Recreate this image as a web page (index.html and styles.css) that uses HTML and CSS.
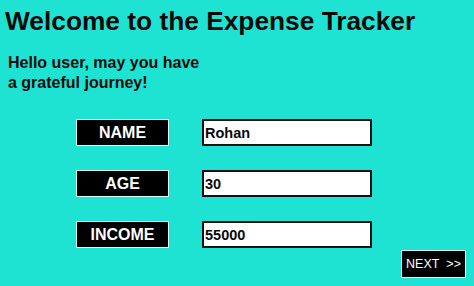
FILE: index.html
```html
<!DOCTYPE html>
<html>
<head>
<meta charset="utf-8">
<link rel="stylesheet" href="styles.css">
</head>
<body>
<div class="page">
  <h1 class="title">Welcome to the Expense Tracker</h1>
  <p class="greeting">Hello user, may you have<br>a grateful journey!</p>
  <div class="form">
    <div class="row">
      <div class="label">NAME</div>
      <div class="field">Rohan</div>
    </div>
    <div class="row">
      <div class="label">AGE</div>
      <div class="field">30</div>
    </div>
    <div class="row">
      <div class="label">INCOME</div>
      <div class="field">55000</div>
    </div>
  </div>
  <div class="footer">
    <button class="next">NEXT&nbsp; &gt;&gt;</button>
  </div>
</div>
</body>
</html>
```
FILE: styles.css
```css
html, body {
  margin: 0;
  padding: 0;
  background: #1fe3d2;
}
body {
  width: 474px;
  height: 286px;
  overflow: hidden;
  font-family: "Liberation Sans", Arial, sans-serif;
  color: #0a0a0a;
}
.page {
  display: flex;
  flex-direction: column;
  padding: 6px 8px 0 5px;
}
.title {
  margin: 0;
  font-size: 26.3px;
  line-height: 30px;
  font-weight: bold;
}
.greeting {
  margin: 17px 0 0 3px;
  font-size: 16px;
  line-height: 20px;
  font-weight: bold;
}
.form {
  display: flex;
  flex-direction: column;
  gap: 24px;
  margin: 26px 0 0 71px;
}
.row {
  display: flex;
  gap: 33px;
  height: 27px;
}
.label {
  width: 91px;
  height: 25px;
  background: #000;
  border: 1px solid #d6fff6;
  color: #fff;
  font-size: 16px;
  font-weight: bold;
  display: flex;
  align-items: center;
  justify-content: center;
}
.field {
  width: 165px;
  height: 23px;
  background: #fff;
  border: 2px solid #111;
  font-size: 14.5px;
  font-weight: bold;
  display: flex;
  align-items: center;
  padding-left: 1px;
}
.footer {
  display: flex;
  justify-content: flex-end;
  margin-top: 2px;
}
.next {
  width: 65px;
  height: 28px;
  background: #000;
  border: 1px solid #d6fff6;
  color: #fff;
  font-family: "Liberation Sans", Arial, sans-serif;
  font-size: 12.5px;
  padding: 0;
  margin: 0;
  display: flex;
  align-items: center;
  justify-content: center;
}
```
